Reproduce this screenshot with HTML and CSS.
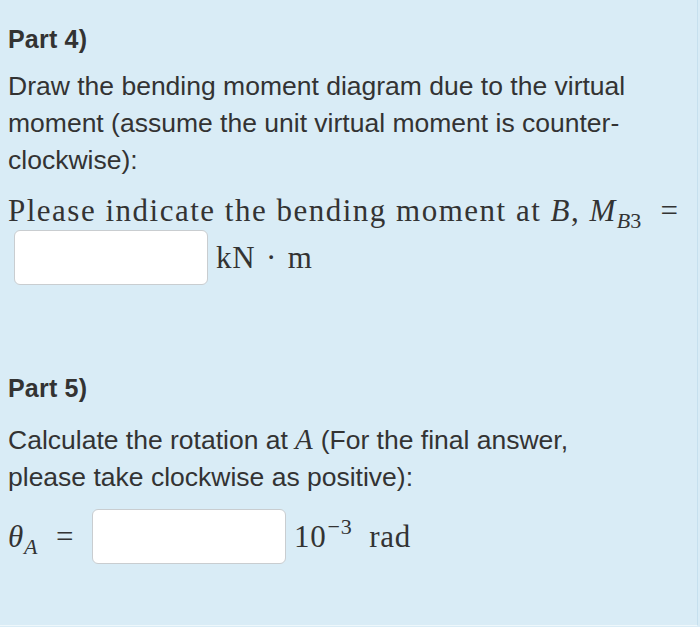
FILE: index.html
```html
<!DOCTYPE html>
<html>
<head>
<meta charset="utf-8">
<link rel="stylesheet" href="styles.css">
</head>
<body>
<div class="page">
  <section class="part part4">
    <h2 class="part-title">Part 4)</h2>
    <p class="text">Draw the bending moment diagram due to the virtual moment (assume the unit virtual moment is counter-clockwise):</p>
    <p class="math-line">Please indicate the bending moment at <i>B</i>, <i>M</i><sub><i>B</i>3</sub> <span class="eq">=</span></p>
    <div class="answer-row row1">
      <span class="input"></span>
      <span class="unit">kN <span class="dot">·</span> m</span>
    </div>
  </section>
  <section class="part part5">
    <h2 class="part-title">Part 5)</h2>
    <p class="text">Calculate the rotation at<span class="mi">A</span>(For the final answer, please take clockwise as positive):</p>
    <div class="answer-row row2">
      <span class="lhs"><i>θ</i><sub><i>A</i></sub> <span class="eq">=</span></span>
      <span class="input"></span>
      <span class="unit">10<sup>−3</sup> rad</span>
    </div>
  </section>
</div>
</body>
</html>
```

FILE: styles.css
```css
html, body {
  margin: 0;
  padding: 0;
}
body {
  width: 700px;
  height: 627px;
  background: #d9ecf6;
  overflow: hidden;
}
.page {
  width: 698px;
  height: 626px;
  border-right: 1px solid #c6e0ee;
  border-bottom: 1px solid #eef7fb;
  padding: 0 0 0 8px;
  box-sizing: border-box;
  color: #333333;
  font-family: "Liberation Sans", Arial, sans-serif;
}
.part-title {
  margin: 0;
  font-size: 25px;
  font-weight: bold;
  line-height: 30px;
  letter-spacing: 0.2px;
}
.part4 .part-title {
  padding-top: 24px;
}
.text {
  margin: 14px 0 0 0;
  font-size: 26.5px;
  line-height: 37px;
  width: 630px;
}
.text .mi {
  display: inline-block;
  font-family: "Liberation Serif", serif;
  font-style: italic;
  font-size: 29px;
  line-height: 1;
  margin: 0 8px 0 7px;
}
.math-line {
  margin: 14px 0 0 0;
  font-family: "Liberation Serif", "Times New Roman", serif;
  font-size: 31px;
  letter-spacing: 1.5px;
  line-height: 36px;
  white-space: nowrap;
}
.math-line sub, .lhs sub {
  font-size: 22px;
  line-height: 0;
  vertical-align: -7px;
  letter-spacing: 0;
}
.eq {
  margin-left: 10px;
}
.answer-row {
  display: flex;
  align-items: center;
  font-family: "Liberation Serif", "Times New Roman", serif;
  font-size: 31px;
  letter-spacing: 0.8px;
}
.row1 {
  margin: 1px 0 0 6px;
}
.input {
  display: block;
  width: 192px;
  height: 53px;
  background: #ffffff;
  border: 1px solid #c9cdd0;
  border-radius: 6px;
}
.unit {
  margin-left: 8px;
}
.dot {
  margin: 0 2px;
}
.part5 .part-title {
  padding-top: 88px;
}
.part5 .text {
  margin-top: 19px;
}
.row2 {
  margin-top: 13px;
}
.lhs {
  width: 84px;
}
.unit sup {
  font-size: 22px;
  line-height: 0;
  vertical-align: 13px;
  margin-left: 1px;
  margin-right: 8px;
}
```
